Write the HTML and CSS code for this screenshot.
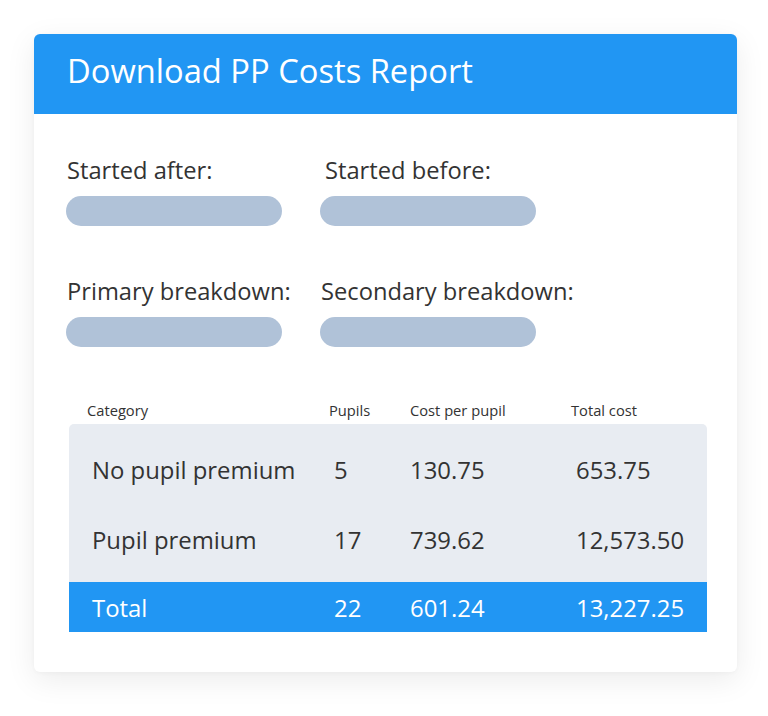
FILE: index.html
```html
<!DOCTYPE html>
<html lang="en">
<head>
<meta charset="utf-8">
<title>Download PP Costs Report</title>
<link rel="stylesheet" href="styles.css">
</head>
<body>
<div class="card">
  <div class="card-header">
    <h1 class="title">Download PP Costs Report</h1>
  </div>
  <div class="card-body">
    <div class="form-grid">
      <div class="field">
        <div class="label">Started after:</div>
        <div class="pill"></div>
      </div>
      <div class="field">
        <div class="label label-shift">Started before:</div>
        <div class="pill"></div>
      </div>
      <div class="field">
        <div class="label">Primary breakdown:</div>
        <div class="pill"></div>
      </div>
      <div class="field">
        <div class="label">Secondary breakdown:</div>
        <div class="pill"></div>
      </div>
    </div>

    <div class="report">
      <div class="head-row">
        <div>Category</div>
        <div>Pupils</div>
        <div>Cost per pupil</div>
        <div>Total cost</div>
      </div>
      <div class="rows">
        <div class="row">
          <div class="cell-cat">No pupil premium</div>
          <div>5</div>
          <div>130.75</div>
          <div>653.75</div>
        </div>
        <div class="row">
          <div class="cell-cat">Pupil premium</div>
          <div>17</div>
          <div>739.62</div>
          <div>12,573.50</div>
        </div>
      </div>
      <div class="row total-row">
        <div class="cell-cat">Total</div>
        <div>22</div>
        <div>601.24</div>
        <div>13,227.25</div>
      </div>
    </div>
  </div>
</div>
</body>
</html>
```

FILE: styles.css
```css
* { box-sizing: border-box; }

html, body {
  margin: 0;
  padding: 0;
  background: #ffffff;
}

body {
  font-family: "Open Sans", "Noto Sans", sans-serif;
  color: #333333;
  padding: 34px 31px 44px 34px;
}

.card {
  width: 703px;
  height: 638px;
  background: #ffffff;
  border-radius: 6px;
  box-shadow: 0 8px 30px rgba(0, 0, 0, 0.08), 0 1px 4px rgba(0, 0, 0, 0.03);
  overflow: hidden;
}

.card-header {
  height: 80px;
  background: #2196f3;
  display: flex;
  align-items: center;
  padding-left: 33px;
}

.title {
  margin: 0;
  font-size: 32.7px;
  font-weight: 400;
  color: #ffffff;
  line-height: 40px;
  padding-bottom: 7px;
}

.card-body {
  padding: 41px 30px 0 32px;
}

.form-grid {
  display: grid;
  grid-template-columns: 216px 216px;
  column-gap: 38px;
  row-gap: 50px;
}

.field {
  display: flex;
  flex-direction: column;
  gap: 11px;
}

.label {
  font-size: 23.7px;
  line-height: 30px;
  color: #333333;
  white-space: nowrap;
  padding-left: 1px;
}

.label-shift {
  padding-left: 5px;
}

.pill {
  height: 30px;
  border-radius: 15px;
  background: #b0c2d8;
}

.report {
  margin-top: 53px;
  margin-left: 3px;
  width: 638px;
}

.head-row {
  display: grid;
  grid-template-columns: 242px 81px 161px 1fr;
  padding-left: 18px;
  font-size: 14.7px;
  line-height: 20px;
  height: 24px;
  color: #333333;
}

.rows {
  background: #e8ecf2;
  border-radius: 5px 5px 0 0;
  padding: 10px 0 8px;
}

.row {
  display: grid;
  grid-template-columns: 265px 76px 166px 1fr;
  align-items: center;
  height: 70px;
  font-size: 23.9px;
  color: #333333;
}

.cell-cat {
  padding-left: 23px;
}

.total-row {
  height: 50px;
  background: #2196f3;
  color: #ffffff;
}
```
